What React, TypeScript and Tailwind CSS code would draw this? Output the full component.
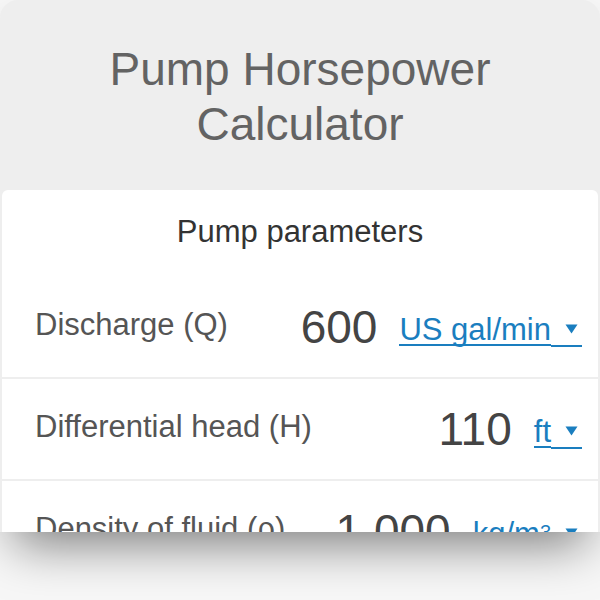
import React from "react";

type Row = {
  label: React.ReactNode;
  value: string;
  unit: React.ReactNode;
};

const rows: Row[] = [
  { label: "Discharge (Q)", value: "600", unit: "US gal/min" },
  { label: "Differential head (H)", value: "110", unit: "ft" },
  {
    label: "Density of fluid (ρ)",
    value: "1,000",
    unit: (
      <>
        kg/m<span className="text-[20px] align-top relative top-[-2px]">3</span>
      </>
    ),
  },
];

function Caret() {
  return (
    <svg width="13" height="10" viewBox="0 0 13 10" className="mb-[11px]">
      <path d="M0.5 0.5 L12.5 0.5 L6.5 9.5 Z" fill="currentColor" />
    </svg>
  );
}

function UnitSelect({ children }: { children: React.ReactNode }) {
  return (
    <span className="flex items-end text-[#1a7ebf] text-[31px] leading-[28px]">
      <span className="border-b-2 border-[#1a7ebf]">{children}</span>
      <span className="flex items-end border-b-2 border-[#1a7ebf] pl-[14px] pr-[4px] h-[30px] mb-[-1px]">
        <Caret />
      </span>
    </span>
  );
}

export default function App() {
  return (
    <div
      className="w-[600px] h-[600px] overflow-hidden bg-[#f7f7f7]"
      style={{ fontFamily: '"Liberation Sans", Arial, Helvetica, sans-serif' }}
    >
      <div className="h-[532px] overflow-hidden rounded-t-[18px] bg-[#eeeeee] shadow-[0_26px_50px_-14px_rgba(0,0,0,0.5)] flex flex-col">
        <div className="h-[190px] shrink-0 pt-[42px] text-center text-[46px] leading-[55px] text-[#636363]">
          <div>Pump Horsepower</div>
          <div>Calculator</div>
        </div>
        <div className="mx-[2px] flex-1 rounded-t-[6px] bg-white">
          <div className="h-[87px] pt-[24px] text-center text-[31px] leading-[36px] text-[#333333]">
            Pump parameters
          </div>
          {rows.map((row, i) => (
            <div
              key={i}
              className="h-[102px] border-b-2 border-[#eeeeee] flex items-center pl-[33px] pr-[16px] pb-[4px]"
            >
              <div className="flex-1 text-[31px] leading-[36px] text-[#555555]">{row.label}</div>
              <div className="flex items-end">
                <span className="text-[46px] leading-[46px] text-[#444444] mr-[22px] mb-[-4px]">
                  {row.value}
                </span>
                <UnitSelect>{row.unit}</UnitSelect>
              </div>
            </div>
          ))}
        </div>
      </div>
    </div>
  );
}
